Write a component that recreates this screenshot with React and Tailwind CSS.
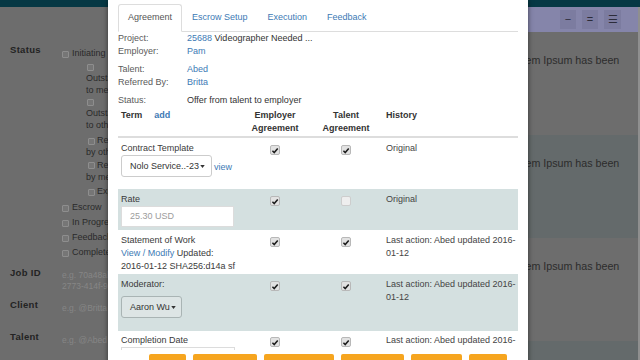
import React from 'react'

const tabs = ['Agreement', 'Escrow Setup', 'Execution', 'Feedback']

function Box() {
  return <span className="inline-block h-[7px] w-[7px] shrink-0 rounded-[1px] border border-[#8e8e8e] bg-[#767676]" />
}

function Check({ on }) {
  return (
    <span
      className={
        on
          ? 'mx-auto mt-[3px] flex h-[10px] w-[10px] items-center justify-center rounded-[2px] border border-[#b8b8b8] bg-[#e2e2e2]'
          : 'mx-auto mt-[3px] flex h-[10px] w-[10px] items-center justify-center rounded-[2px] border border-[#cdcdcd] bg-[#eeeeee]'
      }
    >
      {on && (
        <svg viewBox="0 0 10 10" className="h-[9px] w-[9px]">
          <path d="M1.8 5.4 L4 7.6 L8.4 2.4" fill="none" stroke="#1c1c1c" strokeWidth="1.9" />
        </svg>
      )}
    </span>
  )
}

function Caret() {
  return (
    <svg viewBox="0 0 6 4" className="ml-[1px] h-[3px] w-[5px]">
      <path d="M0 0 H6 L3 4 Z" fill="#333" />
    </svg>
  )
}

function InfoRow({ label, children, className = '' }) {
  return (
    <div className={`flex ${className}`}>
      <div className="w-[69px] text-[#5a5a5a]">{label}</div>
      <div className="text-[#333]">{children}</div>
    </div>
  )
}

function TermRow({ bg = '', pad, term, emp, talent, history }) {
  return (
    <div className={`grid grid-cols-[122px_70px_72px_1fr] ${bg} ${pad}`}>
      <div className="pl-[3px] text-[#3a3a3a]">{term}</div>
      <div><Check on={emp} /></div>
      <div><Check on={talent} /></div>
      <div className="pl-[4px] text-[#444]">{history}</div>
    </div>
  )
}

// filter column; the open modal covers everything right of x=108
function Sidebar() {
  return (
    <aside className="w-[108px] shrink-0 overflow-hidden whitespace-nowrap pl-[10px] pt-[37px] text-[9px] text-[#2a2a2a]">
      <div className="flex">
        <div className="w-[52px] shrink-0 text-[9.5px] font-bold leading-[12px] tracking-[0.3px] text-[#232323]">Status</div>
        <div className="pt-[4px]">
          <div className="flex h-[12px] items-center gap-[3px]"><Box />Initiating</div>
          <div className="pl-[24px] leading-[11.5px]">
            <div className="mt-[1px]">
              <div className="flex h-[12px] items-center pl-[1px]"><Box /></div>
              <div>Outstanding offers</div>
              <div>to me</div>
            </div>
            <div>
              <div className="flex h-[12px] items-center pl-[1px]"><Box /></div>
              <div>Outstanding offers</div>
              <div>to others</div>
            </div>
            <div className="mt-[4px]">
              <div className="flex h-[12px] items-center gap-[2px] pl-[2px]"><Box />Rejected</div>
              <div>by others</div>
            </div>
            <div className="mt-[1px]">
              <div className="flex h-[12px] items-center gap-[2px] pl-[2px]"><Box />Rejected</div>
              <div>by me</div>
            </div>
            <div className="mt-[3px] flex h-[12px] items-center gap-[2px] pl-[2px]"><Box />Expired</div>
          </div>
          <div className="mt-[4px] flex h-[12px] items-center gap-[3px]"><Box />Escrow</div>
          <div className="mt-[3px] flex h-[12px] items-center gap-[3px]"><Box />In Progress</div>
          <div className="mt-[3px] flex h-[12px] items-center gap-[3px]"><Box />Feedback</div>
          <div className="mt-[3px] flex h-[12px] items-center gap-[3px]"><Box />Complete</div>
        </div>
      </div>
      <div className="mt-[8px] flex">
        <div className="w-[52px] shrink-0 text-[9.5px] font-bold leading-[12px] tracking-[0.3px] text-[#232323]">Job ID</div>
        <div className="pt-[3px] text-[8.5px] leading-[10.5px] text-[#868686]">
          <div>e.g. 70a48ab0-</div>
          <div>2773-414f-9d1c</div>
        </div>
      </div>
      <div className="mt-[8px] flex">
        <div className="w-[52px] shrink-0 text-[9.5px] font-bold leading-[12px] tracking-[0.3px] text-[#232323]">Client</div>
        <div className="pt-[4px] text-[8.5px] leading-[10.5px] text-[#868686]">e.g. @Britta</div>
      </div>
      <div className="mt-[17px] flex">
        <div className="w-[52px] shrink-0 text-[9.5px] font-bold leading-[12px] tracking-[0.3px] text-[#232323]">Talent</div>
        <div className="pt-[4px] text-[8.5px] leading-[10.5px] text-[#868686]">e.g. @Abed</div>
      </div>
    </aside>
  )
}

function Listing() {
  const rows = ['bg-[#6d6d6d]', 'bg-[#646a6b]', 'bg-[#6d6d6d]']
  return (
    <main className="flex flex-1 flex-col">
      <div className="flex h-[25px] items-center justify-end gap-[6px] bg-[#8585aa] pr-[17px] text-[11px] text-[#2c2c3a]">
        <span className="flex h-[19px] w-[16px] items-center justify-center bg-[#7c7ca0]">−</span>
        <span className="flex h-[19px] w-[16px] items-center justify-center bg-[#7c7ca0]">=</span>
        <span className="flex h-[19px] w-[17px] items-center justify-center bg-[#7c7ca0]">☰</span>
      </div>
      {rows.map((bg, i) => (
        <div key={i} className={`h-[103px] shrink-0 whitespace-nowrap pl-[402px] pt-[21px] text-[10.7px] leading-[14px] text-[#2c2c2c] ${bg}`}>
          Lorem Ipsum has been
        </div>
      ))}
      <div className="h-[40px] bg-[#646a6b]" />
    </main>
  )
}

function Modal() {
  return (
    <div className="absolute left-[108px] top-0 flex h-[380px] w-[420px] flex-col bg-white text-[9px] leading-[13px] shadow-[0_0_5px_rgba(0,0,0,0.55)]">
      <ul className="mx-[10px] flex border-b border-[#dddddd] pt-[4px]">
        {tabs.map((t, i) => (
          <li
            key={t}
            className={
              i === 0
                ? '-mb-px rounded-t-[3px] border border-[#dddddd] border-b-white bg-white px-[9px] leading-[25px] text-[#555]'
                : 'border border-transparent px-[9px] leading-[25px] text-[#3d7ab5]'
            }
          >
            {t}
          </li>
        ))}
      </ul>

      <div className="h-[318px] shrink-0 overflow-hidden px-[10px]">
        <InfoRow label="Project:"><span className="text-[#3d7ab5]">25688</span> Videographer Needed ...</InfoRow>
        <InfoRow label="Employer:"><span className="text-[#3d7ab5]">Pam</span></InfoRow>
        <InfoRow label="Talent:" className="mt-[5px]"><span className="text-[#3d7ab5]">Abed</span></InfoRow>
        <InfoRow label="Referred By:"><span className="text-[#3d7ab5]">Britta</span></InfoRow>
        <InfoRow label="Status:" className="mt-[5px]">Offer from talent to employer</InfoRow>

        <div className="mt-[2px] grid grid-cols-[122px_70px_72px_1fr] border-b-2 border-[#dddddd] pb-[1px] font-bold text-[#333]">
          <div className="pl-[3px]">Term<span className="ml-[12px] text-[#3d7ab5]">add</span></div>
          <div className="text-center">Employer<br />Agreement</div>
          <div className="text-center">Talent<br />Agreement</div>
          <div className="pl-[4px]">History</div>
        </div>

        <TermRow
          pad="pt-[4px] pb-[12px]"
          emp
          talent
          history="Original"
          term={
            <>
              <div>Contract Template</div>
              <div className="flex items-center">
                <span className="flex h-[22px] w-[91px] items-center rounded-[3px] border border-[#cccccc] bg-white pl-[8px] text-[#333]">
                  Nolo Service..-23<Caret />
                </span>
                <span className="ml-[2px] mt-[2px] text-[#3d7ab5]">view</span>
              </div>
            </>
          }
        />
        <TermRow
          bg="bg-[#d4e0e0]"
          pad="pt-[4px] pb-[3px]"
          emp
          talent={false}
          history="Original"
          term={
            <>
              <div>Rate</div>
              <div className="flex h-[21px] w-[113px] items-center border border-[#dcdcdc] bg-white pl-[8px] text-[#9c9c9c]">25.30 USD</div>
            </>
          }
        />
        <TermRow
          pad="pt-[4px] pb-[1px]"
          emp
          talent
          history={<>Last action: Abed updated 2016-<br />01-12</>}
          term={
            <div className="whitespace-nowrap">
              <div>Statement of Work</div>
              <div><span className="text-[#3d7ab5]">View / Modify</span> Updated:</div>
              <div>2016-01-12 SHA256:d14a sf</div>
            </div>
          }
        />
        <TermRow
          bg="bg-[#d4e0e0]"
          pad="pt-[4px] pb-[13px]"
          emp
          talent
          history={<>Last action: Abed updated 2016-<br />01-12</>}
          term={
            <>
              <div>Moderator:</div>
              <span className="mt-[5px] flex h-[22px] w-[61px] items-center rounded-[3px] border border-[#a9b4b4] bg-[#dde5e5] pl-[8px] text-[#333]">
                Aaron Wu<Caret />
              </span>
            </>
          }
        />
        <TermRow
          pad="pt-[3px]"
          emp
          talent
          history="Last action: Abed updated 2016-"
          term={
            <>
              <div>Completion Date</div>
              <div className="h-[21px] w-[114px] border border-[#dcdcdc] bg-white" />
            </>
          }
        />
      </div>

      <div className="flex justify-end gap-[7px] bg-white pr-[21px] pt-[4px]">
        {[37, 64, 70, 63, 51, 38].map((w, i) => (
          <span key={i} className="block h-[22px] rounded-[2px] bg-[#f6a51f]" style={{ width: w }} />
        ))}
      </div>
    </div>
  )
}

export default function App() {
  return (
    <div className="relative h-[360px] w-[640px] overflow-hidden bg-[#6d6d6d] font-['Liberation_Sans',Arial,sans-serif]">
      <div className="h-[7px] bg-[#063844]" />
      <div className="flex">
        <Sidebar />
        <Listing />
        <div className="w-[2px] shrink-0 bg-[#8f8f8f]" />
      </div>
      <Modal />
    </div>
  )
}
